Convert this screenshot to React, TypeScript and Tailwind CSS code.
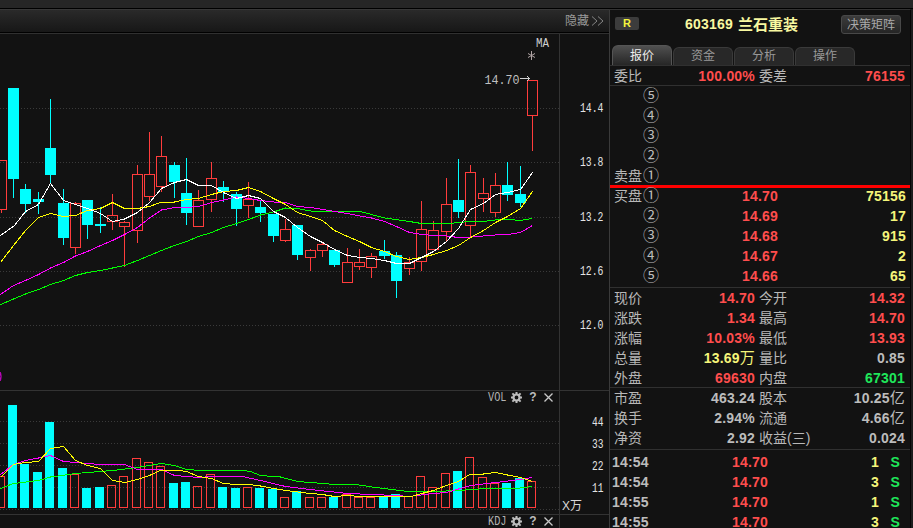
import { clsx } from "clsx";

const CN = "font-['Liberation_Sans','Noto_Sans_CJK_SC',sans-serif]";
const NUM = "font-['Liberation_Sans','Noto_Sans_CJK_SC',sans-serif] font-bold tracking-[0.2px]";

const CYAN = "#00ffff";
const RED = "#ff3c3c";

// [left, high, top, bottom, low, volumeTop, up]
const candles: [number, number, number, number, number, number, 0 | 1][] = [
    [-4, 160, 160, 210, 213, 476, 1],
    [8, 88, 88, 179, 198, 405, 0],
    [20, 184, 189, 204, 213, 464, 0],
    [33, 192, 199, 202, 214, 472, 0],
    [45, 99, 148, 175, 183, 422, 0],
    [58, 189, 203, 238, 245, 468, 0],
    [70, 202, 203, 248, 254, 474, 1],
    [82, 200, 200, 225, 239, 488, 0],
    [95, 207, 224, 226, 233, 487, 0],
    [107, 194, 215, 222, 230, 485, 1],
    [119, 221, 222, 227, 267, 476, 1],
    [132, 165, 174, 231, 243, 458, 1],
    [144, 132, 174, 197, 201, 462, 1],
    [156, 136, 156, 187, 192, 466, 1],
    [169, 162, 165, 182, 198, 483, 0],
    [181, 158, 193, 213, 225, 482, 0],
    [193, 190, 200, 227, 227, 486, 1],
    [206, 162, 178, 200, 212, 474, 1],
    [218, 181, 187, 192, 202, 487, 0],
    [231, 192, 194, 209, 226, 488, 0],
    [243, 182, 199, 206, 218, 487, 1],
    [255, 200, 207, 213, 222, 488, 0],
    [268, 214, 214, 236, 242, 489, 0],
    [280, 219, 229, 241, 242, 497, 1],
    [292, 225, 225, 255, 260, 491, 0],
    [305, 249, 250, 258, 271, 497, 1],
    [317, 242, 244, 251, 257, 497, 1],
    [329, 250, 250, 265, 267, 497, 0],
    [342, 248, 262, 283, 283, 494, 1],
    [354, 249, 262, 267, 270, 497, 1],
    [366, 253, 256, 268, 278, 497, 1],
    [379, 240, 251, 256, 259, 496, 0],
    [391, 252, 255, 281, 298, 494, 0],
    [404, 257, 262, 269, 275, 496, 1],
    [416, 201, 229, 262, 271, 476, 1],
    [428, 221, 230, 250, 250, 487, 1],
    [441, 178, 204, 232, 241, 473, 1],
    [453, 159, 200, 212, 218, 471, 0],
    [465, 165, 172, 226, 236, 457, 1],
    [478, 178, 193, 199, 212, 477, 1],
    [490, 173, 185, 213, 217, 483, 1],
    [502, 162, 185, 195, 201, 483, 0],
    [515, 166, 194, 203, 207, 478, 0],
    [527, 80, 80, 116, 151, 481, 1],
];

const priceLines = [
    {
        color: "#00ff00",
        points: "0,304 25,293.5 38,289 50,284 63,280 75,275 87,272 100,270 112,267.5 124,265 137,260 149,255 161,250 174,245 186,241 198,236 211,232 223,227 236,223 248,219 260,214.5 273,211.5 285,207.5 297,208 310,210.5 322,211 360,211 371,214 384,217.5 409,221 421,223 449,223 458,222 470,221 483,221 490,220 500,219 508,219 520,220 532,218",
    },
    {
        color: "#ff00ff",
        points: "0,294 13,285 25,280 38,274 50,267.5 63,262 75,255.5 87,251 100,245 112,240 124,234 137,227 149,217.5 161,209.5 174,207 186,207 198,206 211,202 223,199.5 236,196.5 248,198 260,200 273,201.5 285,202 297,206 310,207 322,209 334,211 347,213 359,215.5 371,217.5 384,221 396,226 409,232 421,234 433,235 446,235.5 458,237 470,236.5 483,235.5 495,234.5 507,234 520,232 532,225",
    },
    {
        color: "#ffff00",
        points: "0,262 13,245 25,230 38,217 50,213 63,216 75,215 87,210 100,208 112,202 124,208 137,208 149,206 161,201.5 174,201.5 186,199 198,198 211,194 223,191 236,190 248,187 260,191 273,198 285,204 297,212 310,216 322,220 334,230 347,236 359,241 371,247 384,251 396,256 409,259 421,257 433,254 446,250 458,245 470,237 483,230 495,222 507,216 520,208 532,191",
    },
    {
        color: "#ffffff",
        points: "0,235 14,225 25,211 38,204 50,183 63,200 75,204 87,208 100,213 112,221 124,218.5 137,212 149,202 161,188 174,182 186,179 198,185 211,185 223,192 236,198 248,195 260,198 273,211 285,217 297,227 310,236 322,242 334,249 347,255 359,257 371,258 384,260 396,263 409,263 421,257 433,251 446,241 458,228 470,209 483,203 495,194 507,192 520,189 532,172",
    },
];

const volumeLines = [
    {
        color: "#00ff00",
        points: "0,488 13,483 38,480 50,476.5 75,473 112,470 137,467 161,463 174,465 186,469 200,470 242,470 250,471 260,475 280,476.5 297,481 335,484 355,484 375,487 384,488 407,491 433,491 458,490 485,488 515,488 532,486",
    },
    {
        color: "#ff00ff",
        points: "0,474 13,464 25,460 38,457.5 50,455 63,461 75,462 100,464 124,464 137,469 161,469 174,475 186,476 198,477 211,476 242,476 260,480 285,486 310,489 347,493 371,494 396,495 409,496 433,493 446,492 458,488.5 470,485 495,482 520,479 532,477",
    },
    {
        color: "#ffff00",
        points: "0,477 13,464 25,462 38,461 50,448 63,446 75,460 87,465 100,468 112,480 124,482 137,479 149,475 161,469.5 174,469.5 186,471 198,476 211,478 223,483 236,484 248,484 260,485.5 273,488 285,490 297,491.5 310,493 322,494 334,496 347,495 359,496 411,496 421,493 433,490 446,485 458,481 470,473.5 483,473.5 495,472 507,474.5 520,477 532,481",
    },
];

function GridLines({ rows }: { rows: number[] }) {
    return (
        <>
            {rows.map((y) => (
                <line key={y} x1="0" x2="559" y1={y + 0.5} y2={y + 0.5} stroke="#3a3a3a" strokeDasharray="1 2" />
            ))}
        </>
    );
}

function Lines({ items }: { items: { color: string; points: string }[] }) {
    return (
        <g transform="translate(0.5 0.5)">
            {items.map((l) => (
                <polyline key={l.color} points={l.points} fill="none" stroke={l.color} />
            ))}
        </g>
    );
}

function PriceChart() {
    return (
        <svg width="559" height="356" viewBox="0 34 559 356" shapeRendering="crispEdges" className="block">
            <GridLines rows={[108, 162, 217, 271, 325]} />
            {candles.map(([x, high, top, bottom, low, , up]) =>
                up ? (
                    <g key={x} stroke={RED} fill="none">
                        <line x1={x + 5.5} x2={x + 5.5} y1={high} y2={top} />
                        <rect x={x + 0.5} y={top + 0.5} width="10" height={bottom - top - 1} />
                        <line x1={x + 5.5} x2={x + 5.5} y1={bottom} y2={low} />
                    </g>
                ) : (
                    <g key={x} fill={CYAN}>
                        <rect x={x + 5} y={high} width="1" height={low - high} />
                        <rect x={x} y={top} width="11" height={bottom - top} />
                    </g>
                )
            )}
            <Lines items={priceLines} />
            <text x="536" y="47" fill="#d0d0d0" fontSize="12.5" textLength="13" lengthAdjust="spacingAndGlyphs" fontFamily="Liberation Mono, monospace">MA</text>
            <g stroke="#b0a4a4" shapeRendering="auto">
                <path d="M531.5 51v9M528 53.5l7 4M535 53.5l-7 4" />
            </g>
            <text x="484.5" y="84" fill="#c0c0c0" fontSize="13" textLength="35" lengthAdjust="spacingAndGlyphs" fontFamily="Liberation Mono, monospace">14.70</text>
            <path d="M520 78.5h10M527 76.5h1M528 77.5h1M528 79.5h1M527 80.5h1" stroke="#d0d0d0" />
            <path d="M-.5 371.5q1.5 1 1.5 5t-1.5 5" stroke="#ff00ff" fill="none" shapeRendering="auto" />
        </svg>
    );
}

function VolumeChart() {
    return (
        <svg width="559" height="110" viewBox="0 404 559 110" shapeRendering="crispEdges" className="block">
            <GridLines rows={[421, 443, 465, 487, 509]} />
            {candles.map(([x, , , , , top, up]) =>
                up ? (
                    <rect key={x} x={x + 0.5} y={top + 0.5} width="8" height={507 - top} fill="none" stroke={RED} />
                ) : (
                    <rect key={x} x={x} y={top} width="9" height={508 - top} fill={CYAN} />
                )
            )}
            <Lines items={volumeLines} />
        </svg>
    );
}

function IndicatorBar({ name }: { name: string }) {
    return (
        <div className="flex h-[13px] w-[559px] shrink-0 items-center justify-end pr-[6px] text-[#bdbdbd]">
            <svg width="19" height="13" className="overflow-visible">
                <text x="0" y="10" fill="#b4b4b4" fontSize="12.5" textLength="18.5" lengthAdjust="spacingAndGlyphs" fontFamily="Liberation Mono, monospace">{name}</text>
            </svg>
            <svg width="11" height="11" viewBox="-5.5 -5.5 11 11" className="ml-1" stroke="#bdbdbd" fill="none">
                <circle r="3" strokeWidth="2.2" />
                <path d="M0-5.5v2M0 5.5v-2M-5.5 0h2M5.5 0h-2M-4.1-4.1l1.5 1.5M4.1 4.1l-1.5-1.5M4.1-4.1l-1.5 1.5M-4.1 4.1l1.5-1.5" strokeWidth="2" />
            </svg>
            <span className="ml-[7px] w-[8px] text-center font-['Liberation_Sans',sans-serif] text-[12px] leading-[13px] font-bold">?</span>
            <svg width="9" height="9" viewBox="0 0 9 9" className="ml-[7px]" stroke="#c8c8c8" strokeWidth="1.3">
                <path d="M.5.5l8 8M8.5.5l-8 8" />
            </svg>
        </div>
    );
}

function AxisLabel({ value, width, className }: { value: string; width: number; className: string }) {
    return (
        <div className={clsx("flex items-center justify-end pr-[5px]", className)}>
            <svg width={width} height="14" className="overflow-visible">
                <text x="0" y="11" fill="#e4e4e4" fontSize="12.5" textLength={width - 0.5} lengthAdjust="spacingAndGlyphs" fontFamily="Liberation Mono, monospace">{value}</text>
            </svg>
        </div>
    );
}

function ChartArea() {
    return (
        <section className="flex w-[609px] shrink-0 flex-col">
            <div className="flex h-6 shrink-0 items-center justify-end border-t border-b border-t-[#383838] border-b-black bg-linear-to-b from-[#2a2a2a] to-[#171717] pr-[5px]">
                <span className={clsx(CN, "text-[12px] leading-none text-[#9a9a9a]")}>隐藏</span>
                <svg width="13" height="10" viewBox="0 0 13 10" className="ml-[2px]" fill="none" stroke="#858585">
                    <path d="M1 .5l5 4.5-5 4.5M7 .5l5 4.5-5 4.5" />
                </svg>
            </div>
            <div className="flex h-[357px] shrink-0 border-t border-[#303030]">
                <PriceChart />
                <div className="flex grow flex-col border-l border-[#333] pt-[47px]">
                    {["14.4", "13.8", "13.2", "12.6", "12.0"].map((v) => (
                        <AxisLabel key={v} value={v} width={24} className="h-[54.25px]" />
                    ))}
                </div>
            </div>
            <div className="flex h-[124px] shrink-0 border-t border-[#333]">
                <div className="flex flex-col">
                    <IndicatorBar name="VOL" />
                    <VolumeChart />
                </div>
                <div className="flex grow flex-col border-l border-[#333] pt-5">
                    {["44", "33", "22", "11"].map((v) => (
                        <AxisLabel key={v} value={v} width={12} className="h-[22px]" />
                    ))}
                    <div className={clsx(CN, "pl-[2px] text-[12px] leading-[14px] text-[#d8d8d8]")}>X万</div>
                </div>
            </div>
            <div className="flex h-[14px] shrink-0 border-t border-[#333]">
                <IndicatorBar name="KDJ" />
                <div className="grow border-l border-[#333]" />
            </div>
        </section>
    );
}

const LABEL = clsx(CN, "text-[14px] text-[#b8b8b8]");
const red = "text-[#ff4d4d]";
const yellow = "text-[#f5f57a]";
const green = "text-[#1fe65a]";
const gray = "text-[#bcbcbc]";

const stats = [
    ["现价", "14.70", red, "今开", "14.32", red],
    ["涨跌", "1.34", red, "最高", "14.70", red],
    ["涨幅", "10.03%", red, "最低", "13.93", red],
    ["总量", "13.69万", yellow, "量比", "0.85", gray],
    ["外盘", "69630", red, "内盘", "67301", green],
];

const finance = [
    ["市盈", "463.24", gray, "股本", "10.25亿", gray],
    ["换手", "2.94%", gray, "流通", "4.66亿", gray],
    ["净资", "2.92", gray, "收益(三)", "0.024", gray],
];

const bids = [
    ["①", "14.70", "75156"],
    ["②", "14.69", "17"],
    ["③", "14.68", "915"],
    ["④", "14.67", "2"],
    ["⑤", "14.66", "65"],
];

const ticks = [
    ["14:54", "1"],
    ["14:54", "3"],
    ["14:55", "1"],
    ["14:55", "3"],
];

function Num({ value, className }: { value: string; className?: string }) {
    const unit = value.match(/[万亿]$/)?.[0];
    return (
        <span className={clsx(NUM, "text-right text-[14px] whitespace-nowrap", className)}>
            {unit ? value.slice(0, -1) : value}
            {unit && <span className={clsx(CN, "text-[15px] leading-none font-normal")}>{unit}</span>}
        </span>
    );
}

function StatRow({ row }: { row: string[] }) {
    return (
        <div className="flex h-5 items-center pr-[5px] pl-[4px] leading-5">
            <span className={clsx(LABEL, "w-[42px]")}>{row[0]}</span>
            <Num value={row[1]} className={clsx("w-[99px]", row[2])} />
            <span className={clsx(LABEL, "ml-[4px] w-[60px] whitespace-nowrap")}>{row[3]}</span>
            <Num value={row[4]} className={clsx("grow", row[5])} />
        </div>
    );
}

function DepthRow({ label, level, price, volume }: { label?: string; level: string; price?: string; volume?: string }) {
    return (
        <div className="flex h-5 items-center pr-[4px] pl-[4px] leading-5">
            <span className={clsx(LABEL, "w-[29px] whitespace-nowrap")}>{label}</span>
            <span className={clsx(CN, "w-4 text-[16px]", gray)}>{level}</span>
            <Num value={price ?? ""} className={clsx("w-[119px]", red)} />
            <Num value={volume ?? ""} className={clsx("grow", yellow)} />
        </div>
    );
}

function QuotePanel() {
    return (
        <aside className="flex w-[302px] shrink-0 flex-col border-t border-r border-l border-t-[#333] border-r-[#050505] border-l-[#3a3a3a]">
            <div className="flex h-[35px] shrink-0 items-start pl-[5px]">
                <span className={clsx(NUM, "mt-[7px] flex h-[13px] w-6 items-center justify-center rounded-[2px] bg-[#3c3c3c] text-[11px] leading-none text-[#f5f53c]")}>R</span>
                <span className={clsx(NUM, "mt-[4px] ml-[46px] w-[49px] text-[14px] leading-5 text-[#f8f8a0]")}>603169</span>
                <span className={clsx(CN, "mt-[5px] ml-[4px] text-[15px] leading-5 font-bold text-[#f8f8a0]")}>兰石重装</span>
                <button className={clsx(CN, "mt-[5px] ml-auto mr-[9px] h-[19px] w-[60px] rounded-[3px] border border-[#484848] bg-linear-to-b from-[#3c3c3c] to-[#252525] pt-px text-[12px] leading-[17px] whitespace-nowrap text-[#aaa]")}>
                    决策矩阵
                </button>
            </div>
            <div className={clsx(CN, "flex h-5 shrink-0 items-end gap-px pl-[2px] text-[12px]")}>
                <div className="h-5 w-[60px] rounded-t-[6px] border border-b-0 border-[#555] bg-linear-to-b from-[#505050] to-[#262626] text-center leading-5 text-[#eee]">报价</div>
                {["资金", "分析", "操作"].map((t) => (
                    <div key={t} className="h-[18px] w-[60px] rounded-t-[6px] border border-b-0 border-[#3a3a3a] bg-[#282828] text-center leading-4 text-[#999]">{t}</div>
                ))}
            </div>

            <div className="h-[21px] shrink-0 border-t border-b border-[#303030]">
                <StatRow row={["委比", "100.00%", red, "委差", "76155", red]} />
            </div>

            {/* rows overlap the red divider by two pixels, so both halves keep the same pitch */}
            <div className="h-[99px] shrink-0">
                {["⑤", "④", "③", "②", "①"].map((n) => (
                    <DepthRow key={n} level={n} label={n === "①" ? "卖盘" : undefined} />
                ))}
            </div>
            <div className="h-[3px] shrink-0 bg-[#ff0000]" />
            <div className="h-[99px] shrink-0">
                <div className="-mt-[2px]">
                    {bids.map(([n, price, volume], i) => (
                        <DepthRow key={n} level={n} label={i === 0 ? "买盘" : undefined} price={price} volume={volume} />
                    ))}
                </div>
            </div>

            <div className="h-[100px] shrink-0 border-t border-[#303030]">
                {stats.map((row) => (
                    <StatRow key={row[0]} row={row} />
                ))}
            </div>
            <div className="h-[62px] shrink-0 border-t border-[#303030]">
                {finance.map((row) => (
                    <StatRow key={row[0]} row={row} />
                ))}
            </div>

            <div className="shrink-0 border-t border-[#303030] pt-[2px]">
                {ticks.map(([time, volume], i) => (
                    <div key={i} className="flex h-5 items-center pl-[2px] leading-5">
                        <Num value={time} className={gray} />
                        <Num value="14.70" className={clsx("ml-auto", red)} />
                        <Num value={volume} className={clsx("w-[111px]", yellow)} />
                        <Num value="S" className={clsx("mr-[10px] w-[21px]", green)} />
                    </div>
                ))}
            </div>
        </aside>
    );
}

export default function App() {
    return (
        <div className="flex h-[528px] w-[913px] flex-col overflow-hidden bg-[#121212]">
            <div className="h-[9px] shrink-0 border-b border-black bg-[#262626]" />
            <div className="flex min-h-0 grow overflow-hidden">
                <ChartArea />
                <QuotePanel />
                <div className="grow bg-[#1c1c1c]" />
            </div>
        </div>
    );
}
